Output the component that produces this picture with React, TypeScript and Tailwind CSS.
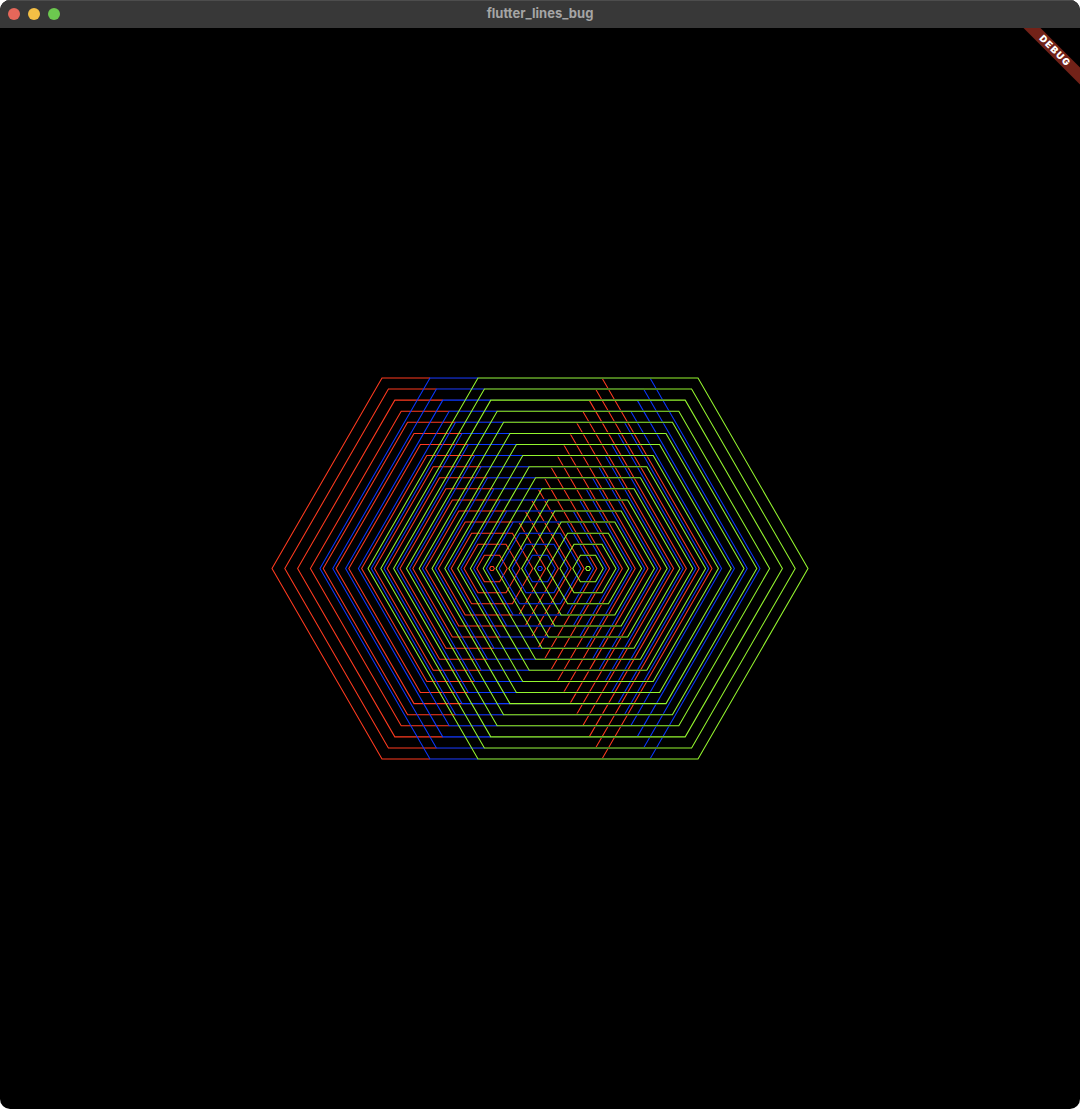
import React from "react";

const CY = 568.5 - 28;
const RINGS = Array.from({ length: 18 }, (_, i) => 220 - i * 12.8);
const SETS = [
  { cx: 492, color: "#ff3b1f" },
  { cx: 540, color: "#0a38ff" },
  { cx: 588, color: "#94f52e" },
];

function hexPoints(cx: number, cy: number, r: number) {
  const h = r * Math.sqrt(3) / 2;
  return [
    [cx - r, cy],
    [cx - r / 2, cy - h],
    [cx + r / 2, cy - h],
    [cx + r, cy],
    [cx + r / 2, cy + h],
    [cx - r / 2, cy + h],
  ]
    .map((p) => p.join(","))
    .join(" ");
}

export default function App() {
  return (
    <div className="w-[1080px] h-[1109px] bg-white">
      <div className="w-full h-full rounded-[10px] overflow-hidden bg-black flex flex-col">
        <div className="h-7 shrink-0 bg-[#383838] border-t border-[#4d4d4d] pb-0.5 relative flex items-center justify-center">
          <div className="absolute left-2 top-[7px] flex gap-2">
            <div className="w-3 h-3 rounded-full bg-[#e5675a]" />
            <div className="w-3 h-3 rounded-full bg-[#f4bf45]" />
            <div className="w-3 h-3 rounded-full bg-[#6cc84f]" />
          </div>
          <span className="text-[13px] font-bold text-[#a5a5a5] font-['Inter',sans-serif]">flutter_lines_bug</span>
        </div>
        <div className="relative flex-1 overflow-hidden">
          <svg width="1080" height="1081" viewBox="0 0 1080 1081" className="block">
            {SETS.map((s) => (
              <g key={s.cx}>
                {RINGS.map((r) => {
                  const h = (r * Math.sqrt(3)) / 2;
                  return (
                    <g key={"under-" + r} stroke="#000000" strokeWidth={1.7}>
                      <line x1={s.cx - r / 2} x2={s.cx + r / 2} y1={CY - h} y2={CY - h} />
                      <line x1={s.cx - r / 2} x2={s.cx + r / 2} y1={CY + h} y2={CY + h} />
                    </g>
                  );
                })}
                {RINGS.map((r) => (
                  <polygon
                    key={"line-" + r}
                    points={hexPoints(s.cx, CY, r)}
                    fill="none"
                    stroke={s.color}
                    strokeWidth={1.05}
                  />
                ))}
              </g>
            ))}
          </svg>
          <div className="absolute top-[16.5px] right-[-35px] w-[120px] h-3 rotate-45 bg-[#722218] flex items-center justify-center">
            <span className="text-[9.5px] leading-none font-black tracking-[1.4px] text-white font-['Inter',sans-serif]">DEBUG</span>
          </div>
        </div>
      </div>
    </div>
  );
}
